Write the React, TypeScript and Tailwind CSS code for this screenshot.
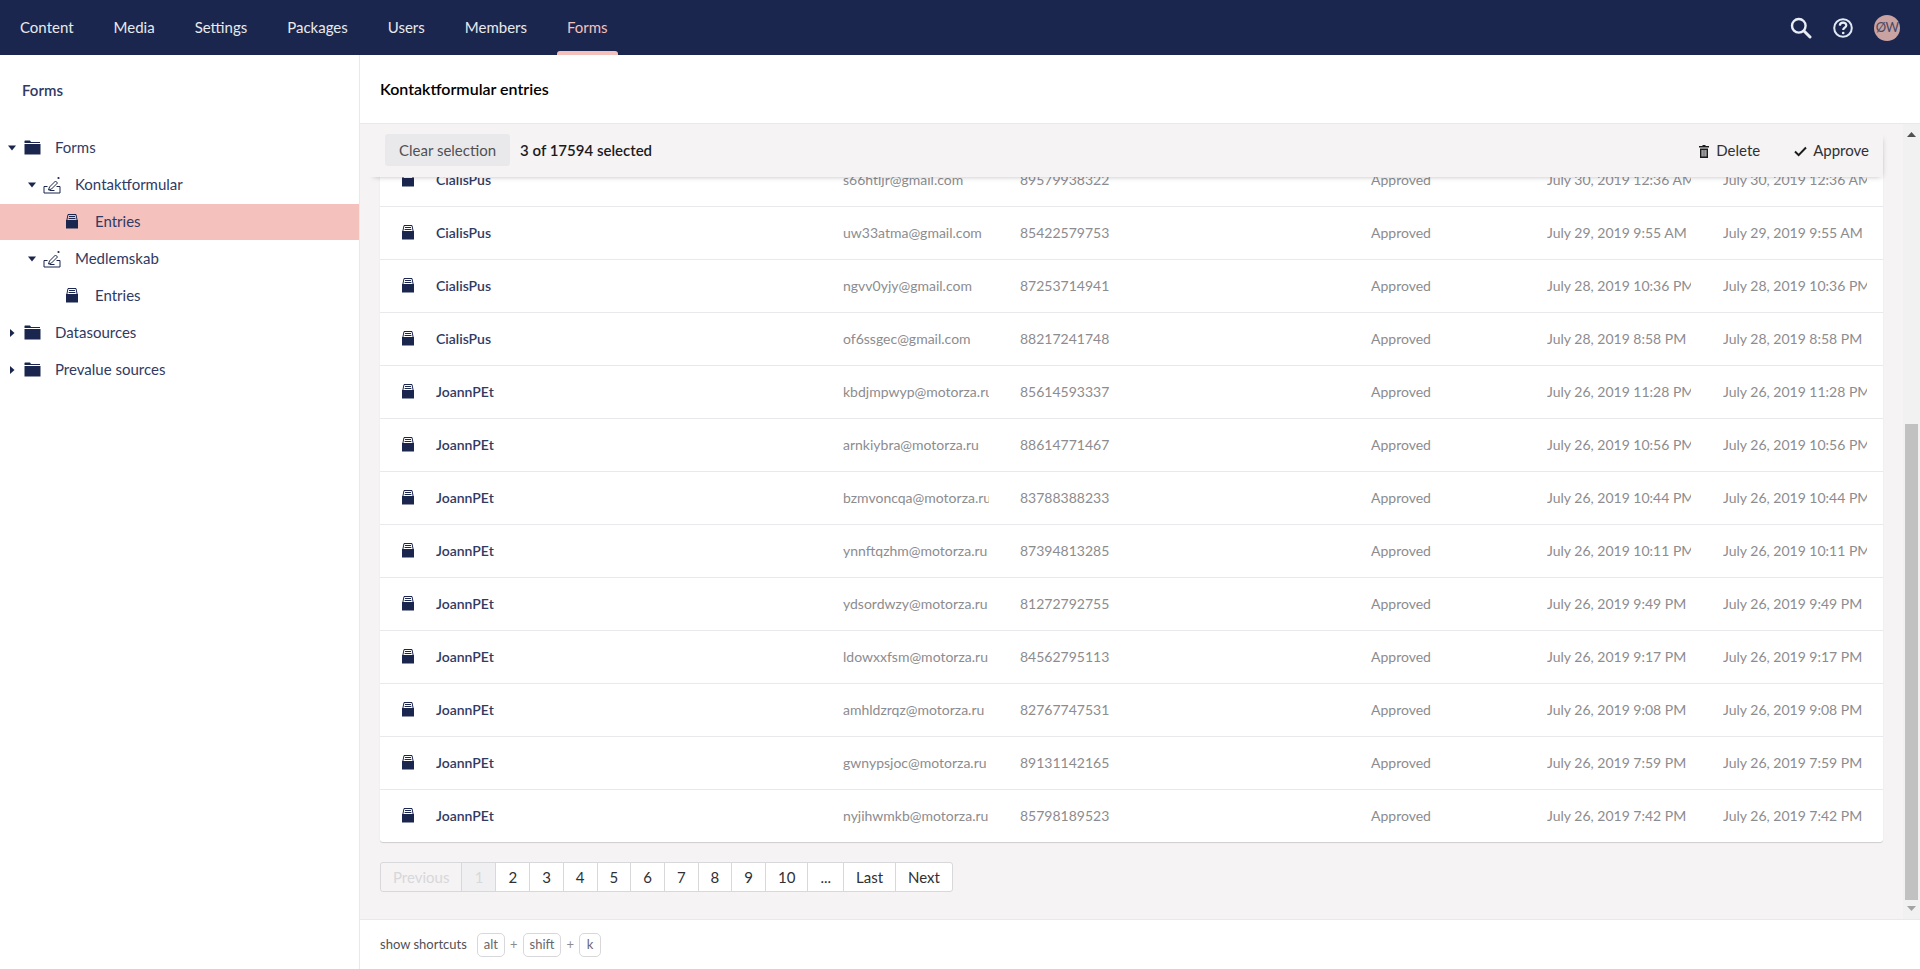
const navItems = ['Content', 'Media', 'Settings', 'Packages', 'Users', 'Members', 'Forms']

const entries = [
  ['CialisPus', 's66htljr@gmail.com', '89579938322', 'July 30, 2019 12:36 AM'],
  ['CialisPus', 'uw33atma@gmail.com', '85422579753', 'July 29, 2019 9:55 AM'],
  ['CialisPus', 'ngvv0yjy@gmail.com', '87253714941', 'July 28, 2019 10:36 PM'],
  ['CialisPus', 'of6ssgec@gmail.com', '88217241748', 'July 28, 2019 8:58 PM'],
  ['JoannPEt', 'kbdjmpwyp@motorza.ru', '85614593337', 'July 26, 2019 11:28 PM'],
  ['JoannPEt', 'arnkiybra@motorza.ru', '88614771467', 'July 26, 2019 10:56 PM'],
  ['JoannPEt', 'bzmvoncqa@motorza.ru', '83788388233', 'July 26, 2019 10:44 PM'],
  ['JoannPEt', 'ynnftqzhm@motorza.ru', '87394813285', 'July 26, 2019 10:11 PM'],
  ['JoannPEt', 'ydsordwzy@motorza.ru', '81272792755', 'July 26, 2019 9:49 PM'],
  ['JoannPEt', 'ldowxxfsm@motorza.ru', '84562795113', 'July 26, 2019 9:17 PM'],
  ['JoannPEt', 'amhldzrqz@motorza.ru', '82767747531', 'July 26, 2019 9:08 PM'],
  ['JoannPEt', 'gwnypsjoc@motorza.ru', '89131142165', 'July 26, 2019 7:59 PM'],
  ['JoannPEt', 'nyjihwmkb@motorza.ru', '85798189523', 'July 26, 2019 7:42 PM'],
]

const pages = ['2', '3', '4', '5', '6', '7', '8', '9', '10', '...', 'Last', 'Next']

function Caret({ open }: { open: boolean }) {
  return (
    <svg width="8" height="8" viewBox="0 0 8 8" className="shrink-0" fill="#1b264f">
      {open ? <path d="M0 1.5h8L4 6.5z" /> : <path d="M2 0l4.5 4L2 8z" />}
    </svg>
  )
}

function FolderIcon() {
  return (
    <svg width="17" height="15" viewBox="0 0 17 15" className="shrink-0" fill="#1b264f">
      <path d="M1 0.5h5l1 1.5h9v1H0.5V1z" />
      <path d="M0.5 4h16v10.5H0.5z" />
    </svg>
  )
}

function FormIcon() {
  return (
    <svg width="18" height="18" viewBox="0 0 18 18" className="shrink-0" fill="none" stroke="#1b264f">
      <path d="M4.5 10.5H1v6.5h16v-6.5h-3.5" strokeWidth="1" />
      <path d="M5.5 14l1-3 6-6 2 2-6 6z" strokeWidth="1" />
      <path d="M6.5 14.5h5" strokeWidth="1" />
      <circle cx="15.5" cy="2" r="1.1" fill="#1b264f" stroke="none" />
    </svg>
  )
}

function EntriesIcon() {
  return (
    <svg width="14" height="15" viewBox="0 0 14 15" className="shrink-0">
      <path d="M3 0.5h8l1.2 6H1.8z" fill="none" stroke="#1b264f" strokeWidth="1" />
      <path d="M4 2.5h6M3.6 4.5h6.8" stroke="#1b264f" strokeWidth="1" />
      <path d="M1 6h12v8.5H1z" fill="#1b264f" />
    </svg>
  )
}

function TreeRow({
  depth,
  label,
  caret,
  icon,
  active,
}: {
  depth: number
  label: string
  caret?: 'open' | 'closed'
  icon: React.ReactNode
  active?: boolean
}) {
  const pad = depth === 0 ? 'pl-[8px]' : depth === 1 ? 'pl-[28px]' : 'pl-[65px]'
  return (
    <div className={`flex items-center text-[15px] text-[#303a63] ${pad} ${active ? 'mt-[1px] h-[36px] bg-[#f5c1bc] pb-[1px]' : 'h-[37px]'}`}>
      {caret && <Caret open={caret === 'open'} />}
      {caret && <span className={depth === 0 ? 'w-[8px]' : 'w-[7px]'} />}
      {icon}
      <span className={depth === 2 ? 'ml-[16px]' : 'ml-[14px]'}>{label}</span>
    </div>
  )
}

function Row({ entry, first }: { entry: string[]; first: boolean }) {
  return (
    <div className={`flex h-[53px] shrink-0 items-center pb-[1px] text-[14px] text-[#8c8c8f] ${first ? '' : 'border-t border-[#e9e9eb]'}`}>
      <div className="flex w-[56px] shrink-0 pl-[21px]">
        <EntriesIcon />
      </div>
      <div className="w-[407px] shrink-0 font-semibold text-[#303a63]">{entry[0]}</div>
      <div className="w-[177px] shrink-0">
        <div className="w-[146px] overflow-hidden whitespace-nowrap">{entry[1]}</div>
      </div>
      <div className="w-[351px] shrink-0">{entry[2]}</div>
      <div className="w-[176px] shrink-0">Approved</div>
      <div className="w-[176px] shrink-0">
        <div className="w-[144px] overflow-hidden whitespace-nowrap">{entry[3]}</div>
      </div>
      <div className="w-[144px] shrink-0 overflow-hidden whitespace-nowrap">{entry[3]}</div>
    </div>
  )
}

function Key({ label }: { label: string }) {
  return (
    <span className="flex h-[24px] min-w-[22px] items-center justify-center rounded-[5px] border border-[#d8d7d9] bg-white px-[6px] text-[13px] text-[#68676b]">
      {label}
    </span>
  )
}

export default function App() {
  return (
    <div className="flex h-screen flex-col overflow-hidden bg-white font-['Lato',sans-serif]">
      <header className="flex h-[55px] shrink-0 items-center bg-[#1b264f]">
        <nav className="flex h-full">
          {navItems.map((item) => (
            <div
              key={item}
              className={`relative flex h-full items-center px-[20px] text-[15px] ${item === 'Forms' ? 'text-[#f5c1bc]' : 'text-[#e9e9eb]'}`}
            >
              {item}
              {item === 'Forms' && (
                <span className="absolute bottom-0 left-[10px] right-[10px] h-[4px] rounded-t-[3px] bg-[#f5c1bc]" />
              )}
            </div>
          ))}
        </nav>
        <div className="ml-auto flex items-center pr-[20px]">
          <svg width="22" height="22" viewBox="0 0 22 22" fill="none" className="mr-[21px]">
            <circle cx="8.8" cy="8.8" r="6.8" stroke="#e9eef5" strokeWidth="2.4" />
            <path d="M14 14l6 6" stroke="#e9eef5" strokeWidth="3" strokeLinecap="round" />
          </svg>
          <svg width="20" height="20" viewBox="0 0 20 20" fill="none" className="mr-[21px]">
            <circle cx="10" cy="10" r="8.8" stroke="#dfe8f3" strokeWidth="2" />
            <path d="M6.8 7.6c.1-2 1.5-3 3.3-3 1.9 0 3.2 1.1 3.2 2.7 0 2.4-3.1 2.4-3.1 4.7" stroke="#e9eef5" strokeWidth="2.2" />
            <circle cx="10.2" cy="15" r="1.3" fill="#e9eef5" />
          </svg>
          <div className="flex h-[26px] w-[26px] items-center justify-center rounded-full bg-[#c9a2a2] text-[13px] tracking-[-0.5px] text-[#4a4a62]">
            ØW
          </div>
        </div>
      </header>

      <div className="flex min-h-0 flex-1">
        <aside className="w-[360px] shrink-0 border-r border-[#e9e9eb]">
          <div className="pl-[22px] pt-[24px] text-[15px] font-semibold leading-[22px] text-[#303a63]">Forms</div>
          <div className="mt-[28px]">
            <TreeRow depth={0} caret="open" label="Forms" icon={<FolderIcon />} />
            <TreeRow depth={1} caret="open" label="Kontaktformular" icon={<FormIcon />} />
            <TreeRow depth={2} label="Entries" icon={<EntriesIcon />} active />
            <TreeRow depth={1} caret="open" label="Medlemskab" icon={<FormIcon />} />
            <TreeRow depth={2} label="Entries" icon={<EntriesIcon />} />
            <TreeRow depth={0} caret="closed" label="Datasources" icon={<FolderIcon />} />
            <TreeRow depth={0} caret="closed" label="Prevalue sources" icon={<FolderIcon />} />
          </div>
        </aside>

        <main className="flex min-w-0 flex-1 flex-col">
          <div className="flex h-[69px] shrink-0 items-center border-b border-[#e9e9eb] pl-[20px] pb-[1px] text-[16px] font-semibold text-black">
            Kontaktformular entries
          </div>

          <div className="flex min-h-0 flex-1">
            <div className="min-w-0 flex-1 overflow-hidden bg-[#f5f3f4] pl-[20px] pr-[20px]">
              <div className="relative z-10 -ml-[20px] flex h-[53px] items-center bg-[#f5f3f4] pl-[25px] pb-[1px] shadow-[6px_7px_6px_-8px_rgba(0,0,0,0.35)]">
                <button className="h-[32px] rounded-[3px] bg-[#e9e9eb] px-[14px] text-[15px] text-[#515054]">
                  Clear selection
                </button>
                <span className="ml-[10px] text-[15px] font-semibold text-[#1b1b1d]">3 of 17594 selected</span>
                <div className="ml-auto flex items-center pr-[14px] text-[15px] text-[#303033]">
                  <svg width="10" height="13" viewBox="0 0 10 13" className="mr-[7px] mt-[2px]" fill="#1b1b1d">
                    <path d="M3.5 0h3v1H10v1.5H0V1h3.5z" />
                    <path d="M1 3.5h8V13H1zM2.6 5v6.5h1V5zm1.9 0v6.5h1V5zm1.9 0v6.5h1V5z" fillRule="evenodd" />
                  </svg>
                  <span>Delete</span>
                  <svg width="13" height="11" viewBox="0 0 13 11" className="ml-[34px] mr-[6px] mt-[2px]" fill="none" stroke="#1b1b1d" strokeWidth="2">
                    <path d="M1 5.5l3.6 3.6L12 1.5" />
                  </svg>
                  <span>Approve</span>
                </div>
              </div>

              <div className="-mt-[24px] flex flex-col rounded-[3px] bg-white shadow-[0_1px_1px_rgba(0,0,0,0.16)]">
                {entries.map((entry, i) => (
                  <Row key={entry[1]} entry={entry} first={i === 0} />
                ))}
              </div>

              <div className="mt-[20px] inline-flex h-[30px] rounded-[3px] border border-[#d8d7d9] text-[15px] text-[#303033]">
                <span className="flex items-center rounded-l-[3px] border-r border-[#d8d7d9] bg-[#f5f3f4] px-[12px] text-[#d8d7d9]">Previous</span>
                <span className="flex w-[34px] items-center justify-center border-r border-[#d8d7d9] bg-[#f0f0f2] text-[#d8d7d9]">1</span>
                {pages.map((p, i) => (
                  <span
                    key={p}
                    className={`flex items-center justify-center bg-white ${p.length === 1 ? 'w-[33.7px]' : 'px-[12px]'} ${i < pages.length - 1 ? 'border-r border-[#d8d7d9]' : 'rounded-r-[3px]'}`}
                  >
                    {p}
                  </span>
                ))}
              </div>
            </div>

            <div className="flex w-[17px] shrink-0 flex-col items-center bg-[#f1f1f1]">
              <svg width="9" height="5" viewBox="0 0 9 5" className="mt-[8px]" fill="#505050">
                <path d="M4.5 0L9 5H0z" />
              </svg>
              <div className="mt-[287px] h-[476px] w-[13px] bg-[#c1c1c1]" />
              <svg width="9" height="5" viewBox="0 0 9 5" className="mt-[6px]" fill="#a3a3a3">
                <path d="M0 0h9L4.5 5z" />
              </svg>
            </div>
          </div>

          <div className="flex h-[50px] shrink-0 items-center gap-[5px] border-t border-[#e9e9eb] pl-[20px] text-[13px] text-[#515054]">
            <span className="mr-[5px]">show shortcuts</span>
            <Key label="alt" />
            <span className="text-[#8c8c8f]">+</span>
            <Key label="shift" />
            <span className="text-[#8c8c8f]">+</span>
            <Key label="k" />
          </div>
        </main>
      </div>
    </div>
  )
}
